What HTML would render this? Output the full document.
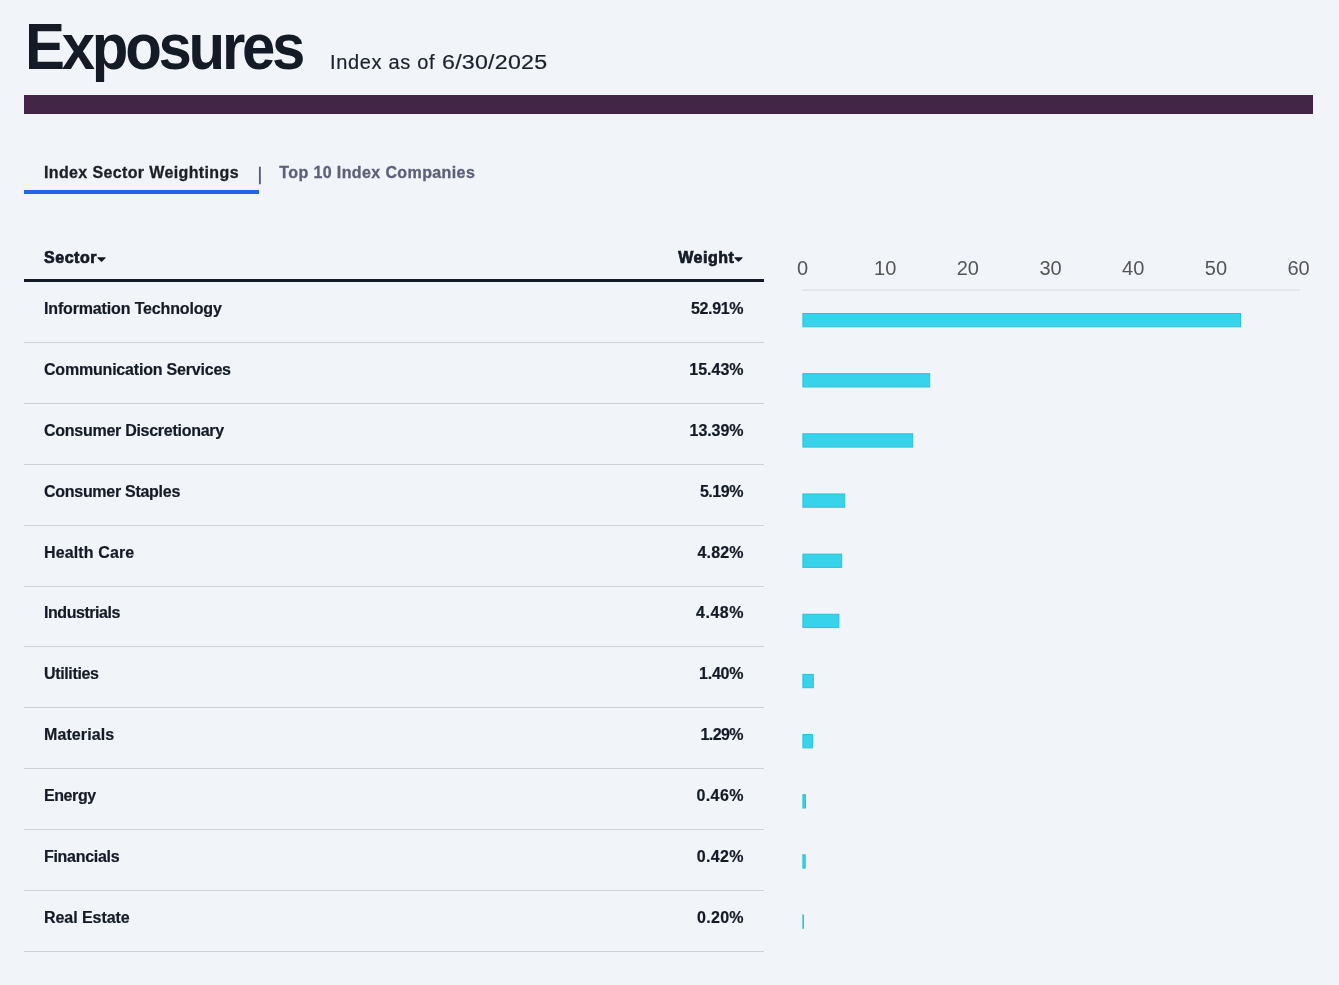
<!DOCTYPE html>
<html lang="en">
<head>
<meta charset="utf-8">
<title>Exposures</title>
<style>
  html, body { margin: 0; padding: 0; }
  body {
    width: 1339px; height: 985px; overflow: hidden; position: relative;
    background: #f1f5fa;
    font-family: "Liberation Sans", sans-serif;
    color: #141a26;
  }
  .g { will-change: transform; }
  h1.title {
    position: absolute; left: 25px; top: 10.6px; margin: 0;
    font-size: 64px; line-height: 72px; font-weight: 700;
    letter-spacing: -3.5px; color: #141a26; white-space: nowrap;
    transform: scaleX(0.937); transform-origin: 0 0;
  }
  .asof {
    position: absolute; left: 330px; top: 50px;
    font-size: 20px; line-height: 24px; color: #1b212d; white-space: nowrap;
    letter-spacing: 0.67px; -webkit-text-stroke: 0.2px #1b212d;
  }
  .asof b { font-weight: 400; display: inline-block; transform: scaleX(1.16); transform-origin: 0 50%; letter-spacing: 0.2px; margin-left: 1px; }
  .rule { position: absolute; left: 24px; top: 95px; width: 1289px; height: 19px; background: #432547; }
  .tab1 { position: absolute; left: 24px; top: 154px; width: 235px; height: 36px; border-bottom: 4px solid #2166ea; }
  .tab1 span { position: absolute; left: 20px; top: 9px; font-size: 16px; line-height: 20px; font-weight: 700; white-space: nowrap; letter-spacing: 0.37px; color: #1c1f26; -webkit-text-stroke: 0.3px #1c1f26; }
  .sep { position: absolute; left: 257.6px; top: 164px; font-size: 18px; line-height: 20px; color: #474b65; font-weight: 400; -webkit-text-stroke: 0.3px #474b65; }
  .tab2 { position: absolute; left: 279.3px; top: 163px; font-size: 16px; line-height: 20px; font-weight: 700; color: #5c6079; white-space: nowrap; letter-spacing: 0.39px; -webkit-text-stroke: 0.3px #5c6079; }
  .thead { position: absolute; left: 24px; top: 236px; width: 740px; height: 43px; border-bottom: 3px solid #141a26; }
  .thead .h { position: absolute; top: 12px; font-size: 16px; line-height: 20px; font-weight: 700; white-space: nowrap; letter-spacing: 0.55px; -webkit-text-stroke: 0.7px #141a26; }
  .thead .h1 { left: 20px; }
  .thead .h2 { right: 21px; }
  .caret { display: inline-block; vertical-align: top; margin: 9px 0 0 -0.5px; width: 9px; height: 5px; }
  .row { position: absolute; left: 24px; width: 740px; height: 1px; background: #d0d1d3; }
  .c1, .c2 { -webkit-text-stroke: 0.2px #141a26; position: absolute; font-size: 16px; line-height: 20px; font-weight: 700; white-space: nowrap; color: #141a26; }
  .c1 { left: 44px; letter-spacing: -0.14px; }
  .c2 { right: 595.8px; letter-spacing: -0.35px; text-align: right; }
  svg.chart { position: absolute; left: 770px; top: 240px; }
</style>
</head>
<body>
<div class="g" style="position:absolute;left:0;top:0;width:1339px;height:985px">
  <h1 class="title">Exposures</h1>
  <div class="asof">Index as of <b>6/30/2025</b></div>
  <div class="rule"></div>

  <div class="tab1"><span>Index Sector Weightings</span></div>
  <div class="sep">|</div>
  <div class="tab2">Top 10 Index Companies</div>

  <div class="thead">
    <div class="h h1">Sector<svg class="caret" viewBox="0 0 9 5"><path d="M0.8 0.3 H8.2 Q9 0.5 8.4 1.2 L5.1 4.6 Q4.5 5.1 3.9 4.6 L0.6 1.2 Q0 0.5 0.8 0.3Z" fill="#141a26"/></svg></div>
    <div class="h h2">Weight<svg class="caret" viewBox="0 0 9 5"><path d="M0.8 0.3 H8.2 Q9 0.5 8.4 1.2 L5.1 4.6 Q4.5 5.1 3.9 4.6 L0.6 1.2 Q0 0.5 0.8 0.3Z" fill="#141a26"/></svg></div>
  </div>
  <div class="c1" style="top:299px;letter-spacing:-0.15px">Information Technology</div><div class="c2" style="top:299px;right:595.8px;letter-spacing:-0.34px">52.91%</div><div class="row" style="top:342px"></div>
  <div class="c1" style="top:360px;letter-spacing:-0.20px">Communication Services</div><div class="c2" style="top:360px;right:595.5px;letter-spacing:0.00px">15.43%</div><div class="row" style="top:403px"></div>
  <div class="c1" style="top:421px;letter-spacing:-0.27px">Consumer Discretionary</div><div class="c2" style="top:421px;right:595.6px;letter-spacing:-0.08px">13.39%</div><div class="row" style="top:464px"></div>
  <div class="c1" style="top:482px;letter-spacing:-0.28px">Consumer Staples</div><div class="c2" style="top:482px;right:595.9px;letter-spacing:-0.43px">5.19%</div><div class="row" style="top:525px"></div>
  <div class="c1" style="top:543px;letter-spacing:0.13px">Health Care</div><div class="c2" style="top:543px;right:595.3px;letter-spacing:0.17px">4.82%</div><div class="row" style="top:586px"></div>
  <div class="c1" style="top:603px;letter-spacing:-0.45px">Industrials</div><div class="c2" style="top:603px;right:595.0px;letter-spacing:0.52px">4.48%</div><div class="row" style="top:646px"></div>
  <div class="c1" style="top:664px;letter-spacing:-0.35px">Utilities</div><div class="c2" style="top:664px;right:595.8px;letter-spacing:-0.25px">1.40%</div><div class="row" style="top:707px"></div>
  <div class="c1" style="top:725px;letter-spacing:0.10px">Materials</div><div class="c2" style="top:725px;right:596.1px;letter-spacing:-0.60px">1.29%</div><div class="row" style="top:768px"></div>
  <div class="c1" style="top:786px;letter-spacing:-0.42px">Energy</div><div class="c2" style="top:786px;right:595.1px;letter-spacing:0.42px">0.46%</div><div class="row" style="top:829px"></div>
  <div class="c1" style="top:847px;letter-spacing:-0.30px">Financials</div><div class="c2" style="top:847px;right:595.1px;letter-spacing:0.35px">0.42%</div><div class="row" style="top:890px"></div>
  <div class="c1" style="top:908px;letter-spacing:-0.06px">Real Estate</div><div class="c2" style="top:908px;right:595.2px;letter-spacing:0.27px">0.20%</div><div class="row" style="top:951px"></div>

  <svg class="chart" width="560" height="720" viewBox="0 0 560 720">
    <g font-family="Liberation Sans, sans-serif" font-size="20" fill="#555555" text-anchor="middle">
      <text x="32.5" y="35.3">0</text>
      <text x="115.2" y="35.3">10</text>
      <text x="197.8" y="35.3">20</text>
      <text x="280.5" y="35.3">30</text>
      <text x="363.2" y="35.3">40</text>
      <text x="445.9" y="35.3">50</text>
      <text x="528.5" y="35.3">60</text>
    </g>
    <rect x="32.2" y="49.2" width="497.6" height="1.8" fill="#e1e5e9"/>
    <g fill="#36d3eb" stroke="#2ec0d9" stroke-width="1">
      <rect x="32.9" y="73.50" width="437.6" height="13.3"/>
      <rect x="32.9" y="133.65" width="126.8" height="13.3"/>
      <rect x="32.9" y="193.80" width="109.8" height="13.3"/>
      <rect x="32.9" y="253.95" width="41.8" height="13.3"/>
      <rect x="32.9" y="314.10" width="38.8" height="13.3"/>
      <rect x="32.9" y="374.25" width="36.0" height="13.3"/>
      <rect x="32.9" y="434.40" width="10.4" height="13.3"/>
      <rect x="32.9" y="494.55" width="9.5" height="13.3"/>
      <rect x="32.9" y="554.70" width="2.6" height="13.3"/>
      <rect x="32.9" y="614.85" width="2.3" height="13.3"/>
      <rect x="32.9" y="675.00" width="0.6" height="13.3"/>
    </g>
  </svg>
</div>
</body>
</html>
